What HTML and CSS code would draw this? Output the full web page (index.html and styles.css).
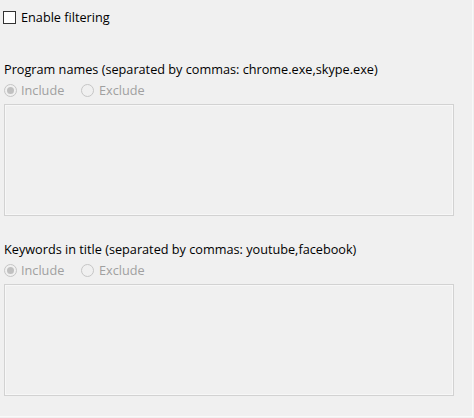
FILE: index.html
```html
<!DOCTYPE html>
<html>
<head>
<meta charset="utf-8">
<link rel="stylesheet" href="styles.css">
</head>
<body>
<div class="panel">
  <div class="toggle">
    <span class="checkbox"></span>
    <span class="toggle-label">Enable filtering</span>
  </div>

  <div class="group first">
    <div class="group-label">Program names (separated by commas: chrome.exe,skype.exe)</div>
    <div class="radios">
      <span class="radio-item"><span class="radio checked"></span><span class="radio-text">Include</span></span>
      <span class="radio-item"><span class="radio"></span><span class="radio-text">Exclude</span></span>
    </div>
    <div class="textbox"></div>
  </div>

  <div class="group">
    <div class="group-label">Keywords in title (separated by commas: youtube,facebook)</div>
    <div class="radios">
      <span class="radio-item"><span class="radio checked"></span><span class="radio-text">Include</span></span>
      <span class="radio-item"><span class="radio"></span><span class="radio-text">Exclude</span></span>
    </div>
    <div class="textbox"></div>
  </div>
</div>
</body>
</html>
```

FILE: styles.css
```css
html, body {
  margin: 0;
  padding: 0;
  background: #f0f0f0;
}

body {
  font-family: "Open Sans", "Noto Sans", sans-serif;
  font-size: 12.7px;
  color: #000;
}

.panel {
  box-sizing: border-box;
  width: 473px;
  height: 417px;
  padding: 8px 0 0 3px;
  border-right: 1px solid #f9f9f9;
  border-bottom: 1px solid #f9f9f9;
}

.toggle {
  display: flex;
  align-items: center;
  height: 18px;
}

.checkbox {
  box-sizing: border-box;
  width: 13px;
  height: 13px;
  border: 1px solid #333;
  background: #fff;
  margin-right: 5px;
}

.toggle-label {
  line-height: 16px;
}

.group {
  margin-top: 25px;
  padding-left: 1px;
}

.group.first {
  margin-top: 35px;
}

.group-label {
  line-height: 16px;
  height: 16px;
}

.radios {
  display: flex;
  align-items: center;
  height: 18px;
  margin-top: 4px;
  color: #a0a0a0;
}

.radio-item {
  display: flex;
  align-items: center;
}

.radio-item:first-child {
  width: 77px;
}

.radio {
  box-sizing: border-box;
  width: 13px;
  height: 13px;
  border-radius: 50%;
  border: 1px solid #c6c6c6;
  background: #f0f0f0;
  margin-right: 4px;
  display: flex;
  align-items: center;
  justify-content: center;
}

.radio-item + .radio-item .radio {
  margin-right: 5px;
}

.radio.checked::after {
  content: "";
  width: 7px;
  height: 7px;
  border-radius: 50%;
  background: #c0c0c0;
}

.radio-text {
  line-height: 16px;
}

.textbox {
  box-sizing: border-box;
  width: 450px;
  height: 112px;
  margin-top: 5px;
  border: 1px solid #d2d2d2;
  box-shadow: inset 0 0 0 1px #f7f7f7;
  background: #f0f0f0;
}
```
